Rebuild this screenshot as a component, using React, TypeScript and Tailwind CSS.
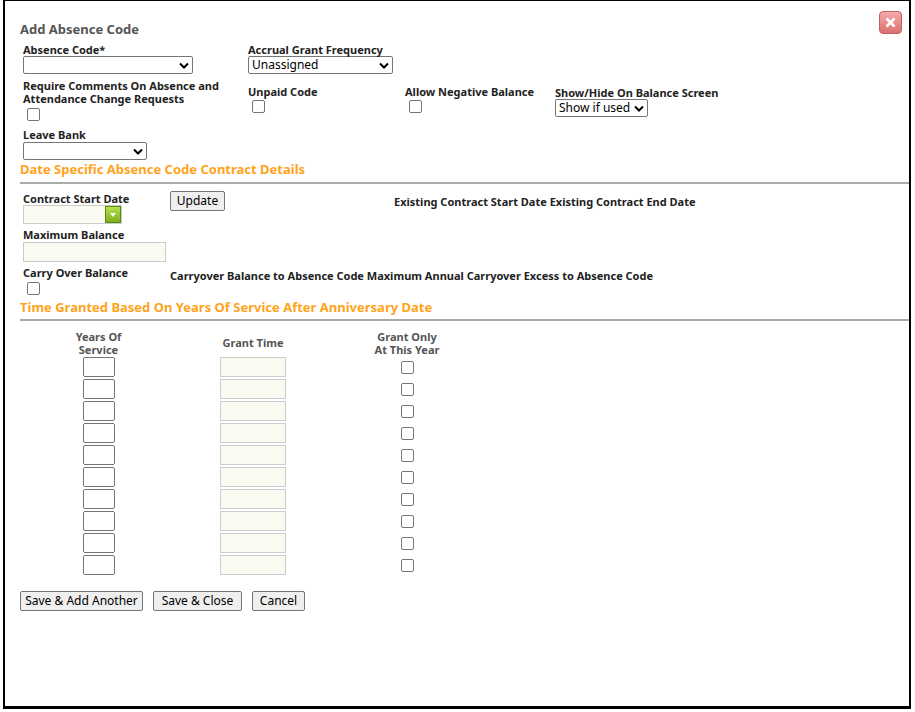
import React from "react";

const lbl = "text-[11px] font-bold text-[#222] leading-[13px] block";
const sel = "h-[18px] border border-[#767676] rounded-[2px] bg-white text-[12px] flex items-center justify-between px-[3px] [font-family:'Liberation_Sans',Arial,sans-serif]";
const Chev = () => (
  <svg width="10" height="7" viewBox="0 0 10 7"><path d="M1 1.5l4 4 4-4" stroke="#000" strokeWidth="2" fill="none" /></svg>
);
const Cb = ({ cls = "" }: { cls?: string }) => (
  <div className={"w-[13px] h-[13px] border border-[#767676] rounded-[2px] bg-white " + cls} />
);
const Btn = ({ t, w }: { t: string; w: string }) => (
  <div className={"h-[20px] border border-[#767676] rounded-[2px] bg-[#efefef] text-[12px] flex items-center justify-center [font-family:'Liberation_Sans',Arial,sans-serif] text-black " + w}>{t}</div>
);
const H = ({ t }: { t: string }) => (
  <div className="text-[13px] font-bold text-[#ffa31a] leading-[15px]">{t}</div>
);

export default function App() {
  const rows = Array.from({ length: 10 });
  return (
    <div className="w-[915px] h-[712px] bg-white [font-family:'DejaVu_Sans',Verdana,sans-serif]">
      <div className="relative ml-[3px] w-[908px] h-[709px] border-l-[2px] border-t-[1px] border-r-[2px] border-b-[3px] border-black px-[15px] pt-[20px]">
        <div className="absolute right-[7px] top-[10px] w-[23px] h-[23px] rounded-[4px] bg-gradient-to-b from-[#f4aaaa] to-[#d97070] border border-[#c06060] flex items-center justify-center">
          <svg width="11" height="11" viewBox="0 0 11 11"><path d="M1.5 1.5l8 8M9.5 1.5l-8 8" stroke="#fff" strokeWidth="2.6" /></svg>
        </div>
        <div className="text-[13px] font-bold text-[#555] leading-[16px]">Add Absence Code</div>
        <div className="flex mt-[6px] ml-[3px]">
          <div className="w-[225px]">
            <span className={lbl}>Absence Code*</span>
            <div className={sel + " w-[170px]"}><span /><Chev /></div>
          </div>
          <div>
            <span className={lbl}>Accrual Grant Frequency</span>
            <div className={sel + " w-[145px]"}><span>Unassigned</span><Chev /></div>
          </div>
        </div>
        <div className="flex mt-[5px] ml-[3px]">
          <div className="w-[225px]">
            <span className={lbl + " whitespace-nowrap"}>Require Comments On Absence and<br />Attendance Change Requests</span>
            <Cb cls="ml-[4px] mt-[3px]" />
          </div>
          <div className="w-[157px] pt-[6px]">
            <span className={lbl}>Unpaid Code</span>
            <Cb cls="ml-[4px] mt-[2px]" />
          </div>
          <div className="w-[150px] pt-[6px]">
            <span className={lbl + " whitespace-nowrap"}>Allow Negative Balance</span>
            <Cb cls="ml-[4px] mt-[2px]" />
          </div>
          <div className="pt-[7px]">
            <span className={lbl + " whitespace-nowrap"}>Show/Hide On Balance Screen</span>
            <div className={sel + " w-[93px]"}><span>Show if used</span><Chev /></div>
          </div>
        </div>
        <div className="mt-[7px] ml-[3px]">
          <span className={lbl}>Leave Bank</span>
          <div className={sel + " w-[124px] mt-[1px]"}><span /><Chev /></div>
        </div>
        <div className="mt-[2px]"><H t="Date Specific Absence Code Contract Details" /></div>
        <div className="h-[2px] bg-[#aaa] mt-[5px] mr-[-15px]" />
        <div className="flex mt-[8px] ml-[3px]">
          <div className="w-[147px]">
            <span className={lbl}>Contract Start Date</span>
            <div className="flex w-[99px] h-[19px] border border-[#ccc] bg-[#fafaf0]">
              <div className="flex-1" />
              <div className="w-[16px] h-full bg-gradient-to-b from-[#b6e04a] to-[#7bb01c] border border-[#5a8a10] flex items-center justify-center">
                <svg width="6" height="4" viewBox="0 0 6 4"><path d="M0 0h6L3 4z" fill="#fff" /></svg>
              </div>
            </div>
          </div>
          <Btn t="Update" w="w-[55px] mt-[-1px]" />
          <div className="ml-[169px] mt-[2px] text-[11px] font-bold text-[#222] whitespace-nowrap">Existing Contract Start Date Existing Contract End Date</div>
        </div>
        <div className="mt-[4px] ml-[3px]">
          <span className={lbl}>Maximum Balance</span>
          <div className="w-[143px] h-[20px] mt-[1px] border border-[#ccc] bg-[#fafaf0]" />
        </div>
        <div className="flex mt-[4px] ml-[3px]">
          <div className="w-[147px]">
            <span className={lbl}>Carry Over Balance</span>
            <Cb cls="ml-[4px] mt-[3px]" />
          </div>
          <div className="mt-[2px] text-[11px] font-bold text-[#222] whitespace-nowrap">Carryover Balance to Absence Code Maximum Annual Carryover Excess to Absence Code</div>
        </div>
        <div className="mt-[5px]"><H t="Time Granted Based On Years Of Service After Anniversary Date" /></div>
        <div className="h-[2px] bg-[#aaa] mt-[4px] mr-[-15px]" />
        <div className="flex mt-[9px] text-[11px] font-bold text-[#555] leading-[13px] text-center">
          <div className="w-[157px]">Years Of<br />Service</div>
          <div className="w-[152px] pt-[6px]">Grant Time</div>
          <div className="w-[156px]">Grant Only<br />At This Year</div>
        </div>
        {rows.map((_, i) => (
          <div key={i} className="flex h-[22px] items-center">
            <div className="w-[157px] flex justify-center">
              <div className="w-[32px] h-[20px] border border-[#767676] rounded-[2px] bg-white" />
            </div>
            <div className="w-[152px] flex justify-center">
              <div className="w-[66px] h-[20px] border border-[#ccc] bg-[#fafaf0]" />
            </div>
            <div className="w-[156px] flex justify-center">
              <Cb />
            </div>
          </div>
        ))}
        <div className="flex gap-[10px] mt-[15px]">
          <Btn t="Save & Add Another" w="w-[123px]" />
          <Btn t="Save & Close" w="w-[89px]" />
          <Btn t="Cancel" w="w-[53px]" />
        </div>
      </div>
    </div>
  );
}
